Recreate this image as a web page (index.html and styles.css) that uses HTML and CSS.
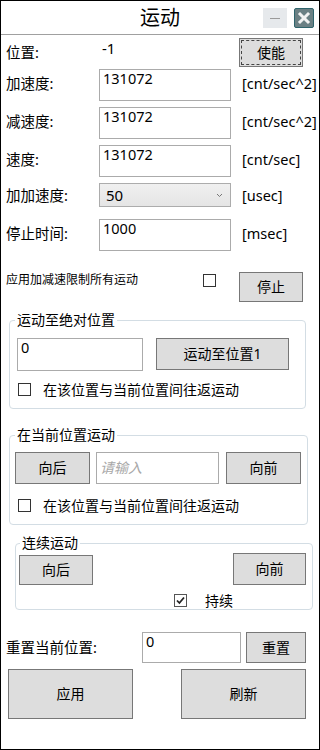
FILE: index.html
```html
<!DOCTYPE html>
<html lang="zh-CN">
<head>
    <meta charset="UTF-8">
    <meta name="viewport" content="width=device-width, initial-scale=1.0">
    <title>运动</title>
    <link rel="stylesheet" href="styles.css">
</head>
<body>
<div class="window">
    <div class="titlebar">
        <span></span>
        <span class="title">运动</span>
        <div class="title-buttons">
            <span class="btn-min"><svg width="24" height="20" viewBox="0 0 24 20"><line x1="7" y1="10.5" x2="17" y2="10.5" stroke="#9a9a9a" stroke-width="1"/></svg></span>
            <span class="btn-close"><svg width="18" height="18" viewBox="0 0 18 18"><path d="M5 5 L13 13 M13 5 L5 13" stroke="#f2f2f2" stroke-width="3" stroke-linecap="square"/></svg></span>
        </div>
    </div>

    <div class="content">
        <div class="row row-pos">
            <span class="label">位置:</span>
            <span class="value">-1</span>
            <button class="btn btn-enable">使能</button>
        </div>

        <div class="row row-field first">
            <span class="label">加速度:</span>
            <div class="textbox">131072</div>
            <span class="unit">[cnt/sec^2]</span>
        </div>
        <div class="row row-field">
            <span class="label">减速度:</span>
            <div class="textbox">131072</div>
            <span class="unit">[cnt/sec^2]</span>
        </div>
        <div class="row row-field">
            <span class="label">速度:</span>
            <div class="textbox">131072</div>
            <span class="unit">[cnt/sec]</span>
        </div>
        <div class="row row-combo">
            <span class="label">加加速度:</span>
            <div class="combo">
                <span>50</span>
                <svg width="7" height="5" viewBox="0 0 7 5"><path d="M1 1 L3.5 3.5 L6 1" fill="none" stroke="#777" stroke-width="1"/></svg>
            </div>
            <span class="unit">[usec]</span>
        </div>
        <div class="row row-field stop">
            <span class="label">停止时间:</span>
            <div class="textbox">1000</div>
            <span class="unit">[msec]</span>
        </div>

        <div class="row row-limit">
            <span class="small-text">应用加减速限制所有运动</span>
            <span class="checkbox"></span>
            <button class="btn btn-stop">停止</button>
        </div>

        <fieldset class="group group-abs">
            <legend>运动至绝对位置</legend>
            <div class="group-row">
                <div class="textbox abs-input">0</div>
                <button class="btn btn-goto">运动至位置1</button>
            </div>
            <div class="check-row">
                <span class="checkbox"></span>
                <span class="check-label">在该位置与当前位置间往返运动</span>
            </div>
        </fieldset>

        <fieldset class="group group-rel">
            <legend>在当前位置运动</legend>
            <div class="group-row">
                <button class="btn btn-dir">向后</button>
                <div class="textbox rel-input placeholder">请输入</div>
                <button class="btn btn-dir">向前</button>
            </div>
            <div class="check-row">
                <span class="checkbox"></span>
                <span class="check-label">在该位置与当前位置间往返运动</span>
            </div>
        </fieldset>

        <fieldset class="group group-jog">
            <legend>连续运动</legend>
            <div class="group-row">
                <button class="btn btn-back">向后</button>
                <button class="btn btn-fwd">向前</button>
            </div>
            <div class="check-row">
                <span class="checkbox checked"><svg width="11" height="11" viewBox="0 0 11 11"><path d="M2 5.5 L4.4 8 L9 2.5" fill="none" stroke="#222" stroke-width="1.8"/></svg></span>
                <span class="check-label">持续</span>
            </div>
        </fieldset>

        <div class="row row-reset">
            <span class="label reset-label">重置当前位置:</span>
            <div class="textbox reset-input">0</div>
            <button class="btn btn-reset">重置</button>
        </div>

        <div class="row row-actions">
            <button class="btn btn-big">应用</button>
            <button class="btn btn-big">刷新</button>
        </div>
    </div>
</div>
</body>
</html>
```

FILE: styles.css
```css
body {
    margin: 0;
    font-family: "Noto Sans", "Noto Sans CJK SC", sans-serif;
    color: #000;
    background: #fff;
}
.window {
    width: 320px;
    height: 750px;
    box-sizing: border-box;
    border: 1px solid #000;
    background: #fff;
}
.titlebar {
    height: 33px;
    border-bottom: 1px solid #a0a0a0;
    display: grid;
    grid-template-columns: 1fr auto 1fr;
    align-items: center;
}
.title {
    font-size: 20px;
    line-height: 24px;
}
.title-buttons {
    justify-self: end;
    display: flex;
    align-items: center;
    gap: 7px;
    margin-right: 5px;
}
.btn-min {
    display: block;
    width: 24px;
    height: 20px;
    background: #e6e9ec;
}
.btn-min svg, .btn-close svg {
    display: block;
}
.btn-close {
    display: block;
    width: 18px;
    height: 18px;
    background: #6b8084;
    border: 1px solid #2f646c;
    border-radius: 2px;
}
.content {
    padding-left: 5px;
}
.row {
    display: flex;
    align-items: center;
}
.label {
    width: 93px;
    font-size: 14.5px;
    line-height: 18px;
    flex-shrink: 0;
}
.row-field .label, .row-field .unit {
    padding-bottom: 4px;
}
.btn {
    font-family: inherit;
    font-size: 14px;
    color: #000;
    background: #dddddd;
    border: 1px solid #777;
    box-sizing: border-box;
    padding: 0;
    line-height: 18px;
}
.row-pos {
    margin-top: 3px;
    height: 29px;
}
.row-pos .label {
    padding-bottom: 2px;
}
.value {
    align-self: flex-start;
    width: 137px;
    padding-left: 3px;
    margin-top: 1px;
    font-size: 15px;
    line-height: 18px;
}
.btn-enable {
    width: 64px;
    height: 29px;
    outline: 1px dashed #444;
    outline-offset: -3px;
}
.textbox {
    box-sizing: border-box;
    border: 1px solid #ababab;
    background: #fff;
    padding: 0 3px;
    font-size: 14.5px;
    line-height: 16px;
}
.row-field {
    margin-top: 6px;
    height: 32px;
}
.row-field.first {
    margin-top: 2px;
}
.row-field.stop {
    margin-top: 12px;
}
.row-field .textbox {
    width: 132px;
    height: 32px;
}
.unit {
    margin-left: 11px;
    font-size: 14.5px;
    line-height: 18px;
    white-space: nowrap;
}
.row-combo {
    margin-top: 6px;
    height: 24px;
}
.combo {
    width: 132px;
    height: 24px;
    box-sizing: border-box;
    border: 1px solid #acacac;
    background: linear-gradient(#f0f0f0, #e5e5e5);
    display: flex;
    align-items: center;
    justify-content: space-between;
    padding: 0 7px 0 6px;
    font-size: 15px;
}
.row-limit {
    margin-top: 21px;
    height: 30px;
    align-items: flex-start;
}
.small-text {
    width: 197px;
    font-size: 12px;
    line-height: 14px;
    margin-top: 1px;
}
.checkbox {
    display: block;
    width: 13px;
    height: 13px;
    box-sizing: border-box;
    border: 1px solid #333;
    background: #fff;
    flex-shrink: 0;
}
.checkbox.checked {
    border-color: #555;
}
.checkbox svg {
    display: block;
}
.row-limit .checkbox {
    margin-top: 2px;
}
.btn-stop {
    margin-left: 23px;
    width: 64px;
    height: 30px;
}
.group {
    margin: 9px 0 0 3px;
    padding: 0 0 12px 0;
    width: 297px;
    box-sizing: border-box;
    border: 1px solid #d3dde4;
    border-radius: 4px;
}
.group legend {
    margin-left: 5px;
    padding: 0 2px;
    font-size: 14px;
    line-height: 18px;
}
.group-row {
    display: flex;
    align-items: flex-start;
}
.group-abs .group-row {
    margin: 9px 0 0 7px;
    gap: 13px;
}
.abs-input {
    width: 126px;
    height: 33px;
}
.btn-goto {
    width: 133px;
    height: 32px;
}
.check-row {
    display: flex;
    align-items: center;
    height: 13px;
}
.check-label {
    font-size: 14px;
    line-height: 16px;
}
.group-abs .check-row {
    margin: 12px 0 0 8px;
    gap: 12px;
}
.group-rel {
    margin-top: 17px;
    width: 299px;
}
.group-rel .group-row {
    margin: 8px 0 0 5px;
    gap: 6px;
}
.btn-dir {
    width: 75px;
    height: 32px;
}
.rel-input {
    width: 123px;
    height: 32px;
    margin-right: 1px;
}
.placeholder {
    color: #a8a8a8;
    font-style: italic;
    font-size: 14px;
    line-height: 30px;
}
.group-rel .check-row {
    margin: 15px 0 0 8px;
    gap: 12px;
}
.group-jog {
    margin: 9px 0 0 9px;
    width: 298px;
    padding-bottom: 2px;
}
.group-jog legend {
    margin-left: 4px;
}
.group-jog .group-row {
    margin-top: 1px;
    align-items: flex-end;
}
.btn-back {
    margin-left: 3px;
    width: 74px;
    height: 30px;
}
.btn-fwd {
    margin-left: auto;
    margin-right: 6px;
    width: 73px;
    height: 32px;
}
.group-jog .check-row {
    margin: 9px 0 0 158px;
    gap: 18px;
}
.row-reset {
    margin-top: 22px;
    height: 31px;
}
.reset-label {
    width: 136px;
    padding-bottom: 2px;
}
.reset-input {
    width: 99px;
    height: 31px;
    align-self: flex-start;
}
.btn-reset {
    margin-left: 5px;
    width: 60px;
    height: 31px;
}
.row-actions {
    margin-top: 6px;
    padding-left: 2px;
    gap: 48px;
}
.btn-big {
    width: 125px;
    height: 50px;
}
```
